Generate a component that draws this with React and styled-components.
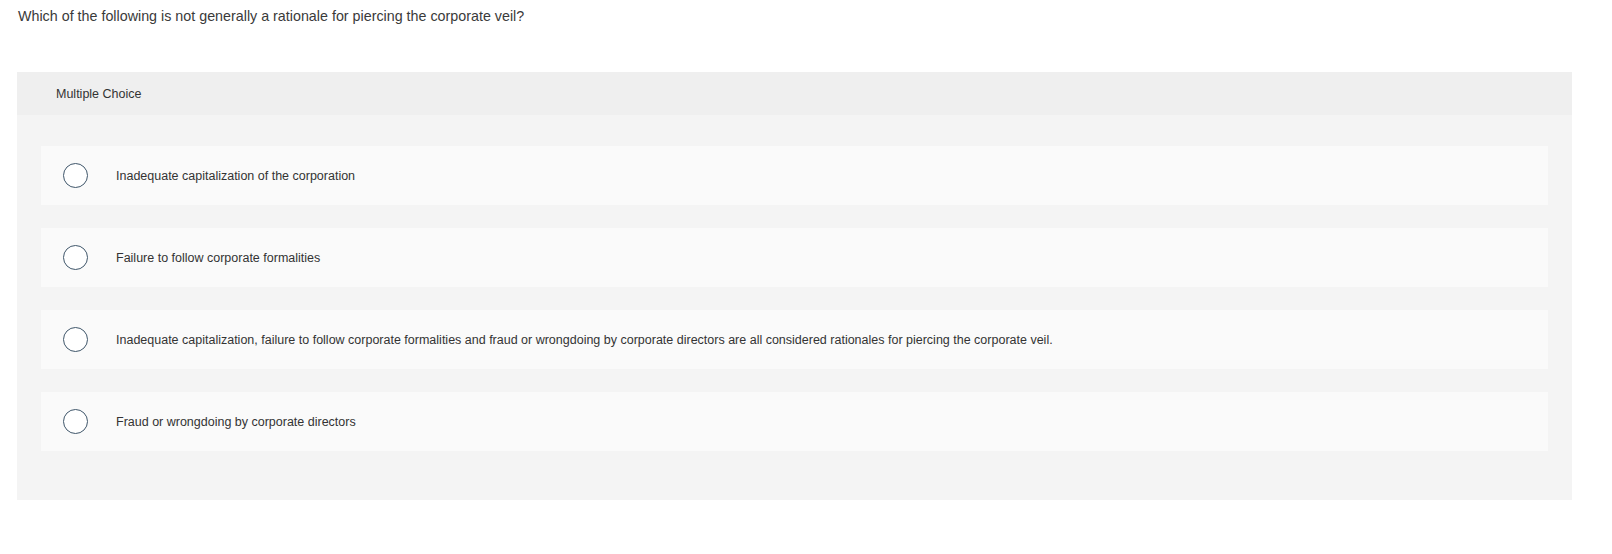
import React from "react";
import styled, { createGlobalStyle } from "styled-components";

const GlobalStyle = createGlobalStyle`
  html, body {
    margin: 0;
    padding: 0;
    background: #ffffff;
  }
  body {
    font-family: "Liberation Sans", Arial, sans-serif;
    color: #333333;
  }
`;

const Page = styled.div`
  padding: 6px 40px 40px 18px;
`;

const Question = styled.p`
  margin: 0;
  font-size: 14.3px;
  line-height: 20px;
  color: #3a3a3a;
`;

const Panel = styled.section`
  margin-top: 46px;
  margin-left: -1px;
  background: #f4f4f4;
`;

const PanelHeader = styled.header`
  height: 43px;
  display: flex;
  align-items: center;
  padding-left: 39px;
  background: #efefef;
  font-size: 12.5px;
  color: #333333;
`;

const Choices = styled.div`
  display: flex;
  flex-direction: column;
  gap: 23px;
  padding: 31px 24px 49px 24px;
`;

const Choice = styled.label`
  height: 59px;
  display: flex;
  align-items: center;
  padding-left: 22px;
  background: #fafafa;
  cursor: pointer;
`;

const Radio = styled.span`
  flex: none;
  width: 23px;
  height: 23px;
  border: 1.5px solid #3f566a;
  border-radius: 50%;
  background: #ffffff;
`;

const ChoiceText = styled.span`
  margin-left: 28px;
  font-size: 12.5px;
  color: #333333;
`;

const options = [
  "Inadequate capitalization of the corporation",
  "Failure to follow corporate formalities",
  "Inadequate capitalization, failure to follow corporate formalities and fraud or wrongdoing by corporate directors are all considered rationales for piercing the corporate veil.",
  "Fraud or wrongdoing by corporate directors"
];

const App = () => (
  <>
    <GlobalStyle />
    <Page>
      <Question>
        Which of the following is not generally a rationale for piercing the
        corporate veil?
      </Question>
      <Panel>
        <PanelHeader>Multiple Choice</PanelHeader>
        <Choices>
          {options.map(text => (
            <Choice key={text}>
              <Radio />
              <ChoiceText>{text}</ChoiceText>
            </Choice>
          ))}
        </Choices>
      </Panel>
    </Page>
  </>
);

export default App;
